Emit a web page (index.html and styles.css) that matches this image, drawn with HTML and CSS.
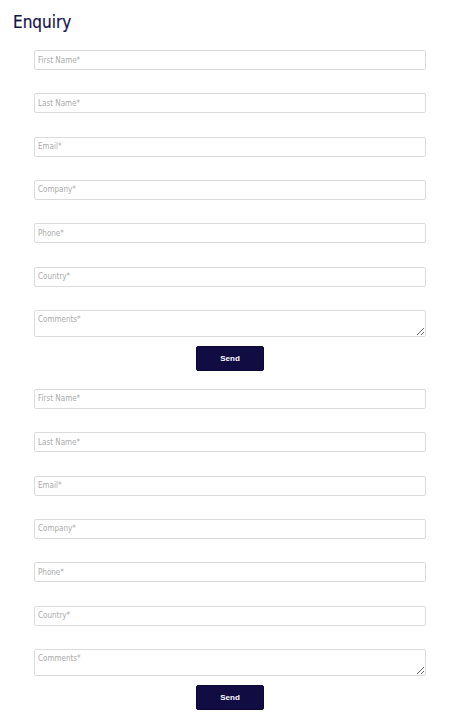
FILE: index.html
```html
<!DOCTYPE html>
<html>
<head>
<meta charset="utf-8">
<link rel="stylesheet" href="styles.css">
</head>
<body>
<h1 class="title">Enquiry</h1>
<form class="enquiry">
  <input class="field" type="text" placeholder="First Name*">
  <input class="field" type="text" placeholder="Last Name*">
  <input class="field" type="email" placeholder="Email*">
  <input class="field" type="text" placeholder="Company*">
  <input class="field" type="text" placeholder="Phone*">
  <input class="field" type="text" placeholder="Country*">
  <textarea class="field comments" placeholder="Comments*"></textarea>
  <button class="send" type="button">Send</button>
</form>
<form class="enquiry">
  <input class="field" type="text" placeholder="First Name*">
  <input class="field" type="text" placeholder="Last Name*">
  <input class="field" type="email" placeholder="Email*">
  <input class="field" type="text" placeholder="Company*">
  <input class="field" type="text" placeholder="Phone*">
  <input class="field" type="text" placeholder="Country*">
  <textarea class="field comments" placeholder="Comments*"></textarea>
  <button class="send" type="button">Send</button>
</form>
</body>
</html>
```
FILE: styles.css
```css
html, body {
  margin: 0;
  padding: 0;
  background: #ffffff;
}
body {
  font-family: "DejaVu Sans Condensed", "DejaVu Sans", sans-serif;
}
.title {
  margin: 0;
  padding: 12px 0 0 13px;
  height: 50px;
  box-sizing: border-box;
  font-family: "DejaVu Sans Condensed", "DejaVu Sans", sans-serif;
  font-size: 17px;
  line-height: 20px;
  font-weight: normal;
  color: #16124a;
  -webkit-text-stroke: 0.2px #16124a;
}
.enquiry {
  display: flex;
  flex-direction: column;
  align-items: center;
  padding: 0 28px 18px 34px;
}
.field {
  display: block;
  width: 100%;
  box-sizing: border-box;
  height: 20px;
  margin: 0 0 23.33px 0;
  padding: 0 3px;
  border: 1px solid #dcdcdc;
  border-radius: 2px;
  background: #fff;
  font-family: "DejaVu Sans Condensed", "DejaVu Sans", sans-serif;
  font-size: 8px;
  color: #333;
  outline: none;
}
.field::placeholder {
  color: #ababab;
}
.comments {
  height: 27px;
  margin-bottom: 9px;
  padding: 4px 3px;
  resize: vertical;
}
.send {
  width: 68px;
  height: 25px;
  border: 1px solid #0b0836;
  border-radius: 2px;
  background: #110c42;
  color: #fff;
  font-family: "Liberation Sans", Arial, sans-serif;
  font-weight: bold;
  font-size: 8px;
  padding: 0;
  cursor: pointer;
}
```
